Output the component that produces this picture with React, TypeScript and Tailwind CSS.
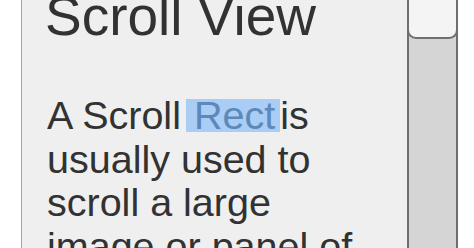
import React from "react";

export default function App() {
  return (
    <div
      className="w-[474px] h-[248px] bg-white flex overflow-hidden"
      style={{ fontFamily: '"Liberation Sans", Arial, sans-serif' }}
    >
      <div className="w-[21px] shrink-0 bg-white" />
      <div className="w-[386px] shrink-0 h-full bg-[#efefef] border-l border-[#a3a3a3] pl-[25px] text-[#323232] overflow-hidden">
        <div className="mt-[-10px] text-[55px] leading-[52px] -ml-[2px] whitespace-nowrap">
          Scroll View
        </div>
        <p className="mt-[52px] w-[322px] text-[39.5px] leading-[43.5px]">
          {"A Scroll"}
          <span className="inline-block h-[33px] leading-[33px] ml-[5px] pl-[8px] pr-[5px] bg-[#a9cdf4] text-[#5c88ba]">
            Rect
          </span>
          {"is usually used to scroll a large image or panel of content"}
        </p>
      </div>
      <div className="w-[51px] shrink-0 h-full border-x-2 border-[#6f6f6f] bg-[#d5d5d5] flex flex-col">
        <div className="h-[39px] -mx-[2px] border-2 border-t-0 border-[#6f6f6f] rounded-b-[9px] bg-[#f4f4f4]" />
      </div>
      <div className="flex-1 bg-white" />
    </div>
  );
}
